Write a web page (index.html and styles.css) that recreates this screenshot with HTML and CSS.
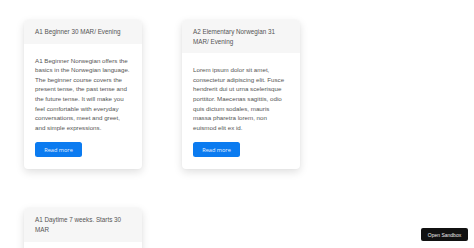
FILE: index.html
```html
<!DOCTYPE html>
<html>
<head>
<meta charset="utf-8">
<link rel="stylesheet" href="styles.css">
</head>
<body>
<div class="grid">
  <div class="card">
    <div class="card-header">A1 Beginner 30 MAR/ Evening</div>
    <div class="card-body">
      <p class="card-text">A1 Beginner Norwegian offers the basics in the Norwegian language. The beginner course covers the present tense, the past tense and the future tense. It will make you feel comfortable with everyday conversations, meet and greet, and simple expressions.</p>
      <a class="btn">Read more</a>
    </div>
  </div>
  <div class="card">
    <div class="card-header">A2 Elementary Norwegian 31 MAR/ Evening</div>
    <div class="card-body">
      <p class="card-text">Lorem ipsum dolor sit amet, consectetur adipiscing elit. Fusce hendrerit dui ut urna scelerisque porttitor. Maecenas sagittis, odio quis dictum sodales, mauris massa pharetra lorem, non euismod elit ex id.</p>
      <a class="btn">Read more</a>
    </div>
  </div>
  <div class="card">
    <div class="card-header">A1 Daytime 7 weeks. Starts 30 MAR</div>
    <div class="card-body">
      <a class="btn">Read more</a>
    </div>
  </div>
</div>
<a class="sandbox">Open Sandbox</a>
</body>
</html>
```
FILE: styles.css
```css
html, body {
  margin: 0;
  background: #fff;
  overflow: hidden;
}
body {
  font-family: "Liberation Sans", Arial, sans-serif;
  color: #555;
  height: 248px;
}
.grid {
  display: grid;
  grid-template-columns: 118px 118px;
  column-gap: 40px;
  row-gap: 39px;
  padding: 20px 24px;
  align-items: start;
}
.card {
  background: #fff;
  border-radius: 4px;
  box-shadow: 0 3px 9px rgba(0, 0, 0, 0.13), 0 0 2px rgba(0, 0, 0, 0.04);
  overflow: hidden;
}
.card-header {
  background: #f6f6f6;
  padding: 7px 11px 7px 11px;
  font-size: 6.3px;
  line-height: 9.6px;
  color: #555;
}
.card-body {
  padding: 12px 11px 12px 11px;
}
.card-text {
  margin: 0 0 10px 0;
  font-size: 6.2px;
  line-height: 9.6px;
  color: #555;
}
.btn {
  display: flex;
  align-items: center;
  justify-content: center;
  width: 47px;
  height: 15px;
  border-radius: 2.5px;
  background: #0b7bf0;
  color: #e8f2ff;
  font-family: "Open Sans", sans-serif;
  font-size: 5.6px;
}
.sandbox {
  position: fixed;
  right: 6px;
  bottom: 7px;
  width: 47px;
  height: 13px;
  display: flex;
  align-items: center;
  justify-content: center;
  background: #111;
  border-radius: 2px;
  color: #eee;
  font-family: "Liberation Sans", Arial, sans-serif;
  font-size: 5px;
}
```
